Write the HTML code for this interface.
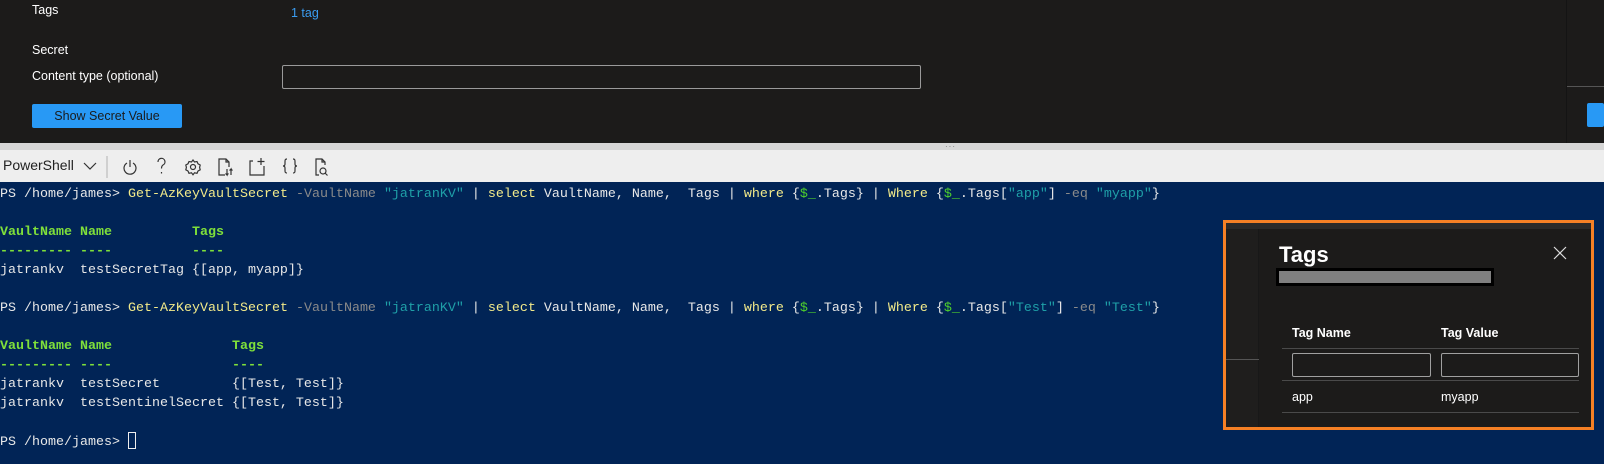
<!DOCTYPE html>
<html><head><meta charset="utf-8"><style>
*{margin:0;padding:0;box-sizing:border-box}
body{width:1604px;height:464px;overflow:hidden;background:#012456;font-family:"Liberation Sans",sans-serif;position:relative}
.abs{position:absolute}
#top{left:0;top:0;width:1604px;height:143px;background:#1c1b1a}
.lbl{color:#fff;font-size:12.5px}
#div{left:0;top:143px;width:1604px;height:7px;background:#d6d6d6}
#tb{left:0;top:150px;width:1604px;height:32px;background:#eeeeee}
.term{font-family:"Liberation Mono",monospace;font-size:13.33px;line-height:19px;color:#e8e8e8;white-space:pre;left:0}
.y{color:#f2ea8a}.g{color:#8a8a8a}.s{color:#1fa0a8}.v{color:#4ed02c}.h{color:#7fe03a;font-weight:bold}
#panel{left:1223px;top:220px;width:371px;height:210px;border:3px solid #f58025;background:#1c1b1a}
</style></head><body>
<div id="top" class="abs">
  <div class="abs lbl" style="left:32px;top:3px">Tags</div>
  <div class="abs" style="left:291px;top:6px;font-size:12.5px;color:#3a9cf0">1 tag</div>
  <div class="abs lbl" style="left:32px;top:43px">Secret</div>
  <div class="abs lbl" style="left:32px;top:69px">Content type (optional)</div>
  <div class="abs" style="left:282px;top:65px;width:639px;height:24px;border:1px solid #9a9a9a;border-radius:2px"></div>
  <div class="abs" style="left:32px;top:104px;width:150px;height:24px;background:#2899f5;border-radius:2px;color:#1b1b1b;font-size:12.5px;text-align:center;line-height:24px">Show Secret Value</div>
  <div class="abs" style="left:1566px;top:0;width:1px;height:143px;background:#141414"></div>
  <div class="abs" style="left:1567px;top:86px;width:37px;height:1px;background:#555"></div>
  <div class="abs" style="left:1587px;top:103px;width:17px;height:24px;background:#2899f5;border-radius:2px"></div>
</div>
<div id="div" class="abs"><div class="abs" style="left:945px;top:-1px;color:#777;font-size:8px;letter-spacing:1px">···</div></div>
<div id="tb" class="abs">
  <div class="abs" style="left:3px;top:7px;font-size:14px;color:#222">PowerShell</div>
  <svg class="abs" style="left:0;top:0" width="340" height="32" fill="none" stroke="#333" stroke-width="1.2">
    <path d="M84 13l6 6 6-6"/>
    <path d="M107 6v22" stroke="#bbb"/>
    <path d="M127 13a6 6 0 1 0 6 0M130 10v7"/>
    <path d="M158 12a3.5 3.5 0 1 1 5 3c-1.5 1-1.5 2-1.5 3.5M161.5 22v1.5"/>
    <circle cx="193" cy="17" r="2.5"/><path d="M193 10l1.5 2 2.5-.5 1 2.3 2.2 1.2-.6 2.4.6 2.4-2.2 1.2-1 2.3-2.5-.5-1.5 2-1.5-2-2.5.5-1-2.3-2.2-1.2.6-2.4-.6-2.4 2.2-1.2 1-2.3 2.5.5z"/>
    <path d="M225 25h-6V9h7l3 3v5M229 12h-3V9M227 19v6l-1.5-1.5M227 25l1.5-1.5M231 25v-6l-1.5 1.5M231 19l1.5 1.5"/>
    <path d="M253 11h-3v14h14v-9M261 8v7M257.5 11.5h7"/>
    <path d="M287 9c-2 0-2 1-2 3v2c0 1.5-1 2-2 2 1 0 2 .5 2 2v2c0 2 0 3 2 3M293 9c2 0 2 1 2 3v2c0 1.5 1 2 2 2-1 0-2 .5-2 2v2c0 2 0 3-2 3"/>
    <path d="M319 25h-3V9h6l3 3v3M322 9v3h3"/><circle cx="323" cy="21" r="3"/><path d="M325 23l2.5 2.5"/>
  </svg>
</div>
<div class="abs term" style="top:185px">PS /home/james> <span class="y">Get-AzKeyVaultSecret</span> <span class="g">-VaultName</span> <span class="s">"jatranKV"</span> | <span class="y">select</span> VaultName, Name,  Tags | <span class="y">where</span> {<span class="v">$_</span>.Tags} | <span class="y">Where</span> {<span class="v">$_</span>.Tags[<span class="s">"app"</span>] <span class="g">-eq</span> <span class="s">"myapp"</span>}

<span class="h">VaultName Name          Tags</span>
<span class="h">--------- ----          ----</span>
jatrankv  testSecretTag {[app, myapp]}

PS /home/james> <span class="y">Get-AzKeyVaultSecret</span> <span class="g">-VaultName</span> <span class="s">"jatranKV"</span> | <span class="y">select</span> VaultName, Name,  Tags | <span class="y">where</span> {<span class="v">$_</span>.Tags} | <span class="y">Where</span> {<span class="v">$_</span>.Tags[<span class="s">"Test"</span>] <span class="g">-eq</span> <span class="s">"Test"</span>}

<span class="h">VaultName Name               Tags</span>
<span class="h">--------- ----               ----</span>
jatrankv  testSecret         {[Test, Test]}
jatrankv  testSentinelSecret {[Test, Test]}

PS /home/james> <span style="display:inline-block;width:8px;height:17px;border:1px solid #eee;vertical-align:-4px"></span></div>
<div id="panel" class="abs">
  <div class="abs" style="left:0;top:0;width:365px;height:6px;background:#2b2a29"></div>
  <div class="abs" style="left:0;top:6px;width:33px;height:198px;background:#1f1e1d;border-right:1px solid #181818"></div>
  <div class="abs" style="left:0;top:136px;width:33px;height:1px;background:#555"></div>
  <div class="abs" style="left:53px;top:19px;color:#fff;font-size:22px;font-weight:bold">Tags</div>
  <div class="abs" style="left:50px;top:45px;width:218px;height:18px;background:#808080;border:3px solid #000"></div>
  <svg class="abs" style="left:327px;top:23px" width="14" height="14" stroke="#ddd" stroke-width="1.2"><path d="M1 1l12 12M13 1L1 13"/></svg>
  <div class="abs" style="left:66px;top:103px;color:#fff;font-size:12.5px;font-weight:bold">Tag Name</div>
  <div class="abs" style="left:215px;top:103px;color:#fff;font-size:12.5px;font-weight:bold">Tag Value</div>
  <div class="abs" style="left:56px;top:125px;width:297px;height:1px;background:#4a4a4a"></div>
  <div class="abs" style="left:66px;top:130px;width:139px;height:24px;border:1px solid #a0a0a0;border-radius:2px"></div>
  <div class="abs" style="left:215px;top:130px;width:138px;height:24px;border:1px solid #a0a0a0;border-radius:2px"></div>
  <div class="abs" style="left:56px;top:157px;width:297px;height:1px;background:#4a4a4a"></div>
  <div class="abs" style="left:66px;top:167px;color:#fff;font-size:12.5px">app</div>
  <div class="abs" style="left:215px;top:167px;color:#fff;font-size:12.5px">myapp</div>
  <div class="abs" style="left:56px;top:189px;width:297px;height:1px;background:#4a4a4a"></div>
</div>
</body></html>
